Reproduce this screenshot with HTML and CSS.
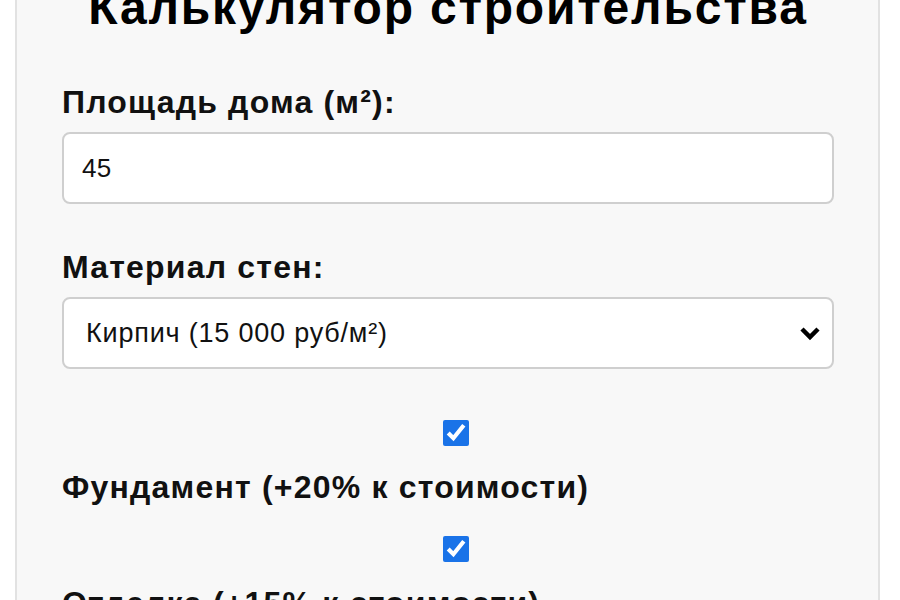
FILE: index.html
```html
<!DOCTYPE html>
<html lang="ru">
<head>
  <meta charset="UTF-8">
  <title>Калькулятор строительства</title>
  <link rel="stylesheet" href="styles.css">
</head>
<body>

<div class="calculator">
  <h1>Калькулятор строительства</h1>

  <label for="area">Площадь дома (м²):</label>
  <input type="number" id="area" class="field" value="45">

  <label for="material">Материал стен:</label>
  <select id="material" class="field">
    <option value="15000">Кирпич (15 000 руб/м²)</option>
    <option value="12000">Газобетон (12 000 руб/м²)</option>
    <option value="10000">Дерево (10 000 руб/м²)</option>
  </select>

  <div class="check">
    <input type="checkbox" id="foundation" checked>
    <label for="foundation">Фундамент (+20% к стоимости)</label>
  </div>

  <div class="check">
    <input type="checkbox" id="finish" checked>
    <label for="finish">Отделка (+15% к стоимости)</label>
  </div>
</div>

</body>
</html>
```

FILE: styles.css
```css
body {
  margin: 0;
  background: #fff;
  font-family: "Liberation Sans", Arial, sans-serif;
  color: #111;
}

.calculator {
  margin: -40px 20px 0 15px;
  padding: 0 44px 40px 45px;
  background: #f8f8f8;
  border: 2px solid #e2e2e2;
  border-radius: 10px;
}

h1 {
  margin: 18px 0 48px;
  font-size: 48px;
  line-height: 56px;
  letter-spacing: 1.8px;
  text-align: center;
  color: #000;
}

label {
  display: block;
  margin-bottom: 12px;
  font-size: 32px;
  line-height: 36px;
  letter-spacing: 1.2px;
  font-weight: bold;
}

.field {
  display: block;
  box-sizing: border-box;
  width: 100%;
  height: 72px;
  margin: 0 0 45px;
  padding: 0 18px;
  font-family: "Liberation Sans", Arial, sans-serif;
  font-size: 26px;
  letter-spacing: 0.3px;
  color: #111;
  background: #fff;
  border: 2px solid #cfcfcf;
  border-radius: 8px;
}

select.field {
  padding-left: 22px;
  font-size: 27px;
  letter-spacing: 0.8px;
  appearance: none;
  background-image: url("data:image/svg+xml,%3Csvg xmlns='http://www.w3.org/2000/svg' width='24' height='16' viewBox='0 0 24 16'%3E%3Cpath d='M4 4l8 8 8-8' fill='none' stroke='%23000' stroke-width='4.5'/%3E%3C/svg%3E");
  background-repeat: no-repeat;
  background-position: right 10px center;
}

.check {
  display: flex;
  flex-direction: column;
  padding-top: 6px;
  margin-bottom: 25px;
}

.check input {
  align-self: center;
  width: 26px;
  height: 26px;
  margin: 0 0 23px 16px;
  accent-color: #1a73e8;
}

.check label {
  margin-bottom: 0;
}
```
